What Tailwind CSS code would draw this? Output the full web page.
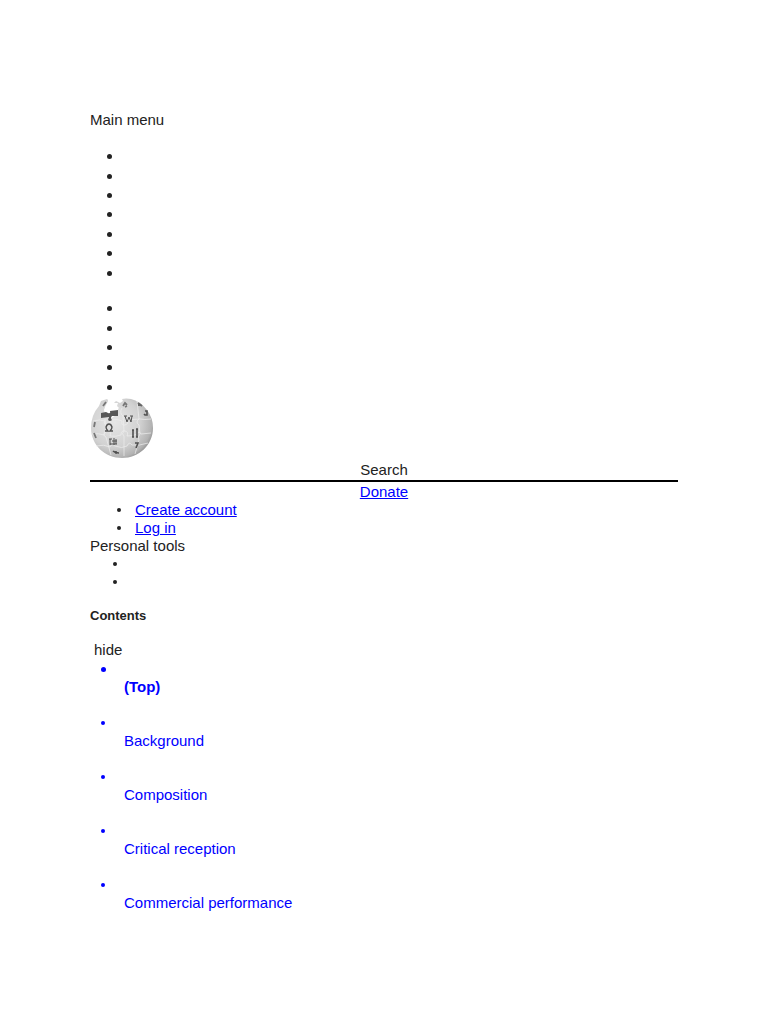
<!DOCTYPE html>
<html lang="en">
<head>
    <meta charset="UTF-8">
    <meta name="viewport" content="width=device-width, initial-scale=1.0">
    <title>Wikipedia</title>
    <script src="https://cdn.jsdelivr.net/npm/@tailwindcss/browser@4"></script>
</head>
<body class="bg-white px-[90px] pt-[111px] pb-28 font-['Liberation_Sans',Arial,sans-serif] text-[15px] leading-[18px] text-[#222]">
    <!-- Main menu -->
    <nav>
        <p>Main menu</p>
        <ul class="mt-[18px] grid h-[136px] auto-rows-fr items-center pl-[17px]">
            <li class="size-[5px] rounded-full bg-[#222]"></li>
            <li class="size-[5px] rounded-full bg-[#222]"></li>
            <li class="size-[5px] rounded-full bg-[#222]"></li>
            <li class="size-[5px] rounded-full bg-[#222]"></li>
            <li class="size-[5px] rounded-full bg-[#222]"></li>
            <li class="size-[5px] rounded-full bg-[#222]"></li>
            <li class="size-[5px] rounded-full bg-[#222]"></li>
        </ul>
        <ul class="mt-4 grid h-[98px] auto-rows-fr items-center pl-[17px]">
            <li class="size-[5px] rounded-full bg-[#222]"></li>
            <li class="size-[5px] rounded-full bg-[#222]"></li>
            <li class="size-[5px] rounded-full bg-[#222]"></li>
            <li class="size-[5px] rounded-full bg-[#222]"></li>
            <li class="size-[5px] rounded-full bg-[#222]"></li>
        </ul>
    </nav>

    <!-- Logo -->
    <a href="#" aria-label="Wikipedia" class="block w-16">
        <svg class="block h-16 w-16" viewBox="0 0 64 64">
            <defs>
                <radialGradient id="globe" cx="0.38" cy="0.4" r="0.68">
                    <stop offset="0" stop-color="#e6e6e6"/>
                    <stop offset="0.6" stop-color="#d2d2d2"/>
                    <stop offset="0.88" stop-color="#b3b3b3"/>
                    <stop offset="1" stop-color="#8c8c8c"/>
                </radialGradient>
            </defs>
            <path fill="url(#globe)" d="M17 2 Q19 3 17 6 Q15 9 14 13 L15 17 L20 22 L28 17 V12 L29 11 L27 9 L28 6 L24 6 L26 4 L30 6 L33 4 L32 2 Q36 1 41 2 Q50 4 57 13 Q63 21 63 31 C63 48 49 61 32 61 S1 48 1 31 Q1 18 9 9 L11 4 Z"/>
            <g fill="none" stroke="#eee" stroke-width="0.7">
                <path d="M3 24 q7-2 12 0 q-2 4 2 4 t3-5 q6-2 12 1 q-1 5 3 4 t2-5 l13-1 q4 1 11 0"/>
                <path d="M2 37 q7-1 12 1 q0-5 4-4 t2 5 q6 1 11-1 q0-5 4-4 t2 5 q7 0 10-2 q2-4 4 0 l10-1"/>
                <path d="M6 49 q8-2 14 1 q2-4 5-1 q7 3 12 0 q2-5 5-1 q7 1 16-2"/>
                <path d="M15 22 l1 13 q-4 3 0 5 l5 18 M32 11 q-3 5 1 8 l1 15 q-3 3 0 5 v20 M47 4 l2 18 q-4 3 0 6 l1 9 q-3 3-1 6 l-4 14"/>
            </g>
            <!-- Gap left by the missing pieces -->
            <path fill="#575757" d="M11 16 L16 15 L18 16 Q21 17 20 14 L28 13 L28 19 L22 19 Q20 21 22 23 Q20 25 18 23 L19 20 L11 21 Z"/>
            <!-- Marks on the puzzle pieces -->
            <g fill="none" stroke="#505050" stroke-width="1">
                <path stroke-width="1.4" d="M15 34 h3 q-2-2-2-4 q1-3 3-3 t3 3 q0 2-2 4 h3"/>
                <path d="M35 19 l2 6 2-5 2 5 1-6 M34 19 h3 M40 19 h3"/>
                <path stroke-width="1.6" d="M43 33 v7 M47 32 v8 M42 33 h2 M46 32 h2 M42 40 h2 M46 40 h2"/>
                <path d="M19 42 h3 M20 47 h7 M20 42 v6 M24 41 v7 M22 44 h5 M26 42 v5"/>
                <path stroke-width="1.8" stroke="#777" d="M5 25 l-1 5 M4 36 l2 5 M13 9 l3-4 M33 9 l2-3 2 2 M37 9 l-2 1"/>
                <path stroke-width="2" stroke="#666" d="M48 6 l4 3 M48 8 l3 0"/>
                <path stroke-width="1.6" d="M55 14 h2 v4 h-2 l-1-1 M45 46 h3 l-2 5 M23 54 q2 2 6 2 M26 54 v3"/>
            </g>
        </svg>
    </a>

    <!-- Search and donate -->
    <div class="border-b-2 border-black pb-px text-center">
        <p>Search</p>
    </div>
    <p class="pt-px text-center">
        <a href="#" class="text-[#0000ff] underline">Donate</a>
    </p>

    <!-- Personal tools -->
    <ul class="pl-[27px]">
        <li class="flex items-center gap-[14px]">
            <span class="size-[4px] rounded-full bg-[#222]"></span>
            <a href="#" class="text-[#0000ff] underline">Create account</a>
        </li>
        <li class="flex items-center gap-[14px]">
            <span class="size-[4px] rounded-full bg-[#222]"></span>
            <a href="#" class="text-[#0000ff] underline">Log in</a>
        </li>
    </ul>
    <p>Personal tools</p>
    <ul class="pl-[23px]">
        <li class="flex h-[18px] items-center"><span class="size-[4px] rounded-full bg-[#222]"></span></li>
        <li class="flex h-[18px] items-center"><span class="size-[4px] rounded-full bg-[#222]"></span></li>
    </ul>

    <!-- Contents -->
    <h2 class="mt-4 text-[13px] font-bold">Contents</h2>
    <button type="button" class="mt-4 ml-1 block">hide</button>
    <ul class="mt-px space-y-[18px] pl-[11px] text-[#0000ff]">
        <li>
            <div class="flex h-[18px] items-center"><span class="size-[5px] rounded-full bg-[#0000ff]"></span></div>
            <a href="#" class="ml-[23px] block font-bold">(Top)</a>
        </li>
        <li>
            <div class="flex h-[18px] items-center"><span class="size-[4px] rounded-full bg-[#0000ff]"></span></div>
            <a href="#" class="ml-[23px] block">Background</a>
        </li>
        <li>
            <div class="flex h-[18px] items-center"><span class="size-[4px] rounded-full bg-[#0000ff]"></span></div>
            <a href="#" class="ml-[23px] block">Composition</a>
        </li>
        <li>
            <div class="flex h-[18px] items-center"><span class="size-[4px] rounded-full bg-[#0000ff]"></span></div>
            <a href="#" class="ml-[23px] block">Critical reception</a>
        </li>
        <li>
            <div class="flex h-[18px] items-center"><span class="size-[4px] rounded-full bg-[#0000ff]"></span></div>
            <a href="#" class="ml-[23px] block">Commercial performance</a>
        </li>
    </ul>
</body>
</html>
